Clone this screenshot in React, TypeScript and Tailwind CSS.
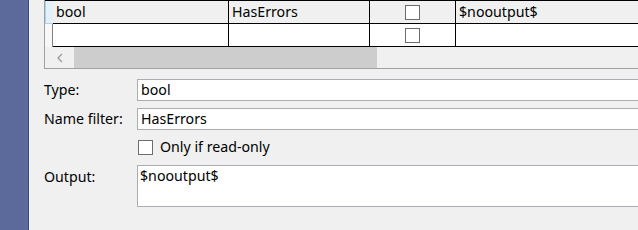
import React from 'react';

const font = { fontFamily: '"Noto Sans", "Open Sans", sans-serif' };

function Check() {
  return <div className="w-[15px] h-[15px] border border-[#6d6d6d] bg-white" />;
}

export default function App() {
  return (
    <div className="w-[638px] h-[230px] flex bg-[#f0f0f0] overflow-hidden text-[14.2px] text-black" style={font}>
      <div className="w-[29px] h-full bg-[#5b6a9a] border-r border-[#3e4a70] shrink-0" />
      <div className="flex-1 flex flex-col pl-[15px]">
        {/* grid */}
        <div className="h-[69px] border-l border-b border-[#a0a0a0] flex flex-col overflow-hidden">
          <div className="flex h-[24px] border-t border-black">
            <div className="w-[8px] bg-[#e3f0fa] border-l border-b border-[#a9d3f2] shrink-0" />
            <div className="flex flex-1 border-b border-black bg-[#f0f0f0]">
              <div className="w-[176px] border-r border-black pl-[3px] leading-[22px] shrink-0">bool</div>
              <div className="w-[141px] border-r border-black pl-[3px] leading-[22px] shrink-0">HasErrors</div>
              <div className="w-[86px] border-r border-black flex justify-center items-center shrink-0"><Check /></div>
              <div className="flex-1 pl-[3px] leading-[22px]">$nooutput$</div>
            </div>
          </div>
          <div className="flex h-[23px]">
            <div className="w-[8px] bg-[#f7f7f7] border-r border-[#808080] shrink-0" />
            <div className="flex flex-1 border-b border-black bg-white">
              <div className="w-[176px] border-r border-black shrink-0" />
              <div className="w-[141px] border-r border-black shrink-0" />
              <div className="w-[86px] border-r border-black flex justify-center items-center shrink-0"><Check /></div>
              <div className="flex-1" />
            </div>
          </div>
          <div className="flex flex-1 bg-[#f0f0f0]">
            <div className="w-[29px] flex items-center justify-center shrink-0">
              <svg width="6" height="10" viewBox="0 0 6 10"><path d="M5 1 L1 5 L5 9" fill="none" stroke="#9a9a9a" strokeWidth="1.3" /></svg>
            </div>
            <div className="w-[303px] bg-[#cdcdcd] shrink-0" />
          </div>
        </div>
        {/* form */}
        <div className="flex items-center mt-[10px] h-[22px]">
          <div className="w-[93px] shrink-0">Type:</div>
          <div className="flex-1 h-[22px] border-y border-l border-[#abadb3] bg-white pl-[3px] leading-[20px]">bool</div>
        </div>
        <div className="flex items-center mt-[7px] h-[22px]">
          <div className="w-[93px] shrink-0">Name filter:</div>
          <div className="flex-1 h-[22px] border-y border-l border-[#abadb3] bg-white pl-[3px] leading-[20px]">HasErrors</div>
        </div>
        <div className="flex items-center mt-[9px] h-[16px] pl-[94px]">
          <Check />
          <span className="ml-[7px]">Only if read-only</span>
        </div>
        <div className="flex mt-[10px]">
          <div className="w-[93px] shrink-0 pt-[1px]">Output:</div>
          <div className="flex-1 h-[42px] border-y border-l border-[#abadb3] bg-white pl-[2px] leading-[20px]">$nooutput$</div>
        </div>
      </div>
    </div>
  );
}
